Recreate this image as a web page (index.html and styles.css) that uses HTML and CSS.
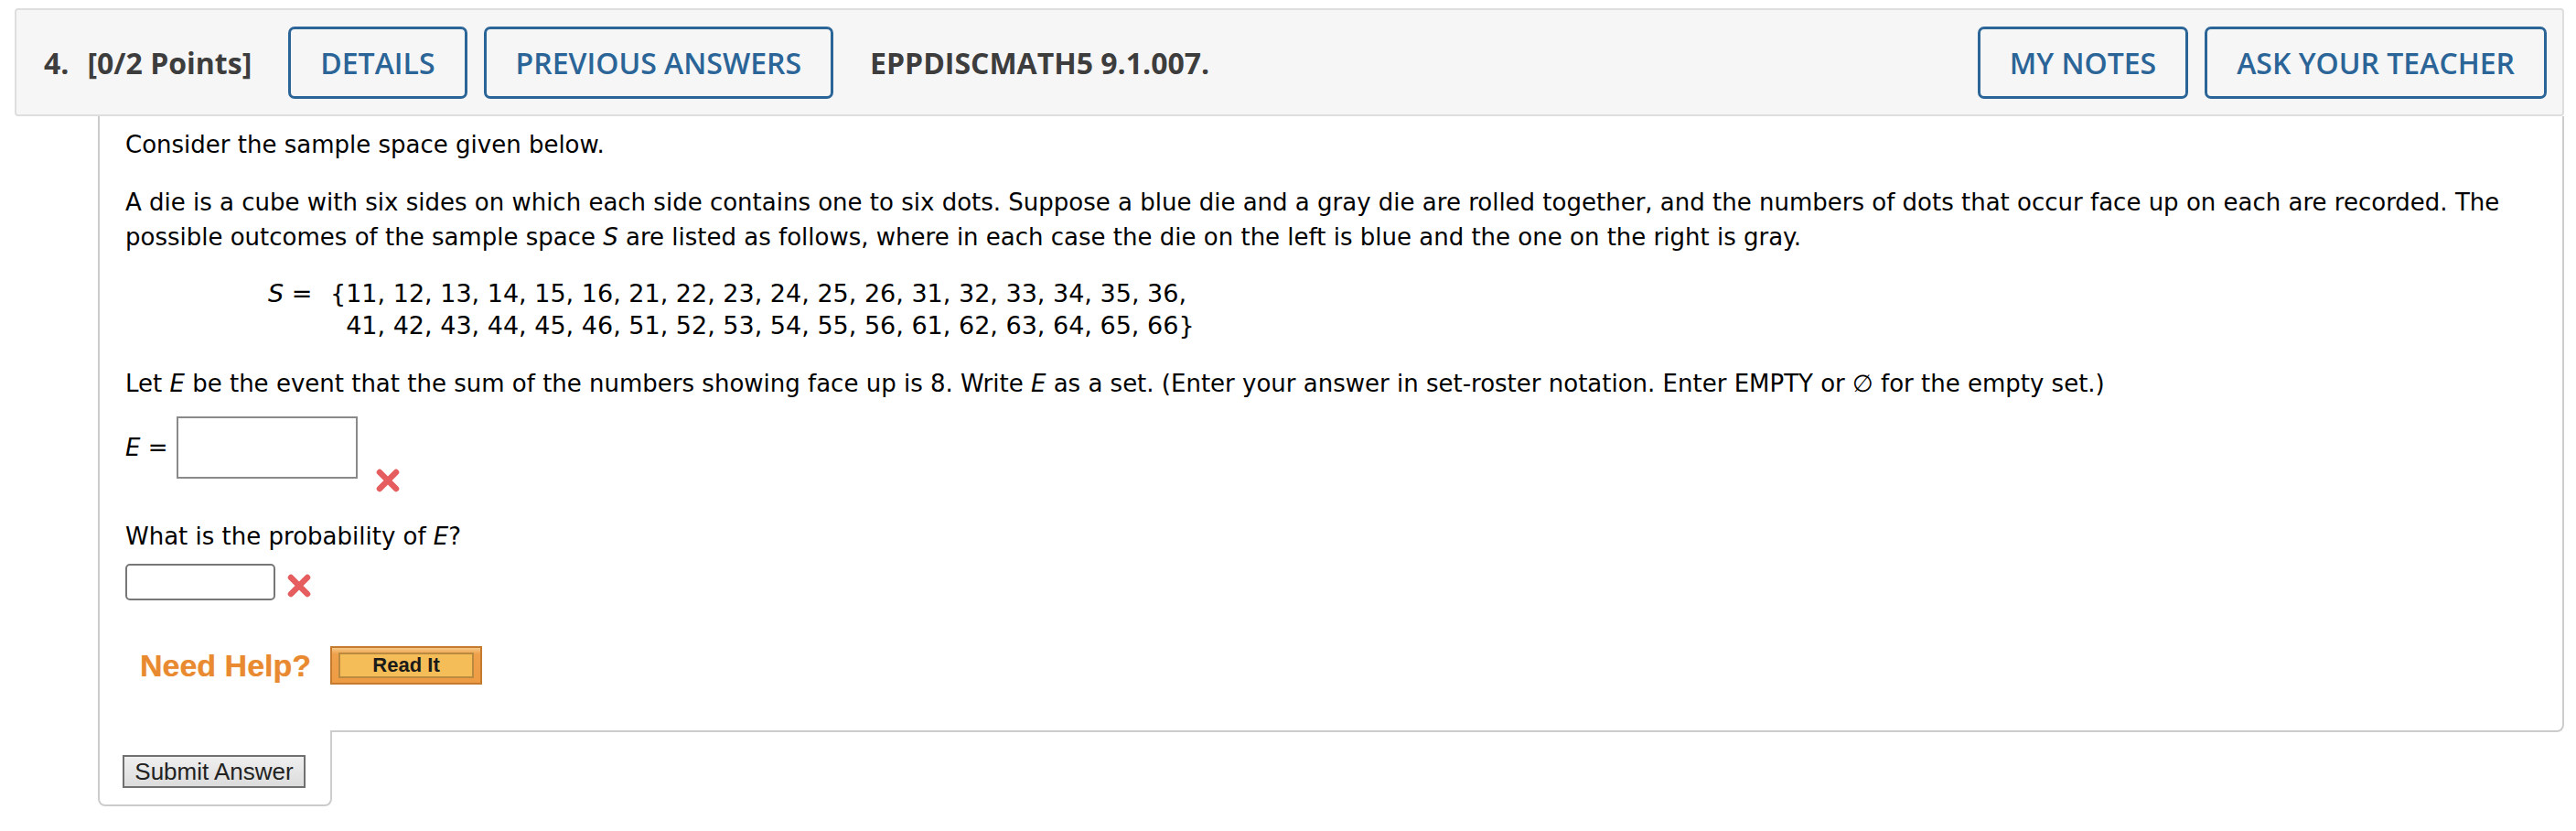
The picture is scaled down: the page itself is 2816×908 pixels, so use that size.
FILE: index.html
```html
<!DOCTYPE html>
<html lang="en">
<head>
<meta charset="utf-8">
<title>Question 4</title>
<link rel="stylesheet" href="styles.css">
</head>
<body>
<div class="page">
  <div class="qhead">
    <span class="qnum">4.</span>
    <span class="qpts">[0/2 Points]</span>
    <button class="hbtn first">DETAILS</button>
    <button class="hbtn">PREVIOUS ANSWERS</button>
    <span class="qcode">EPPDISCMATH5 9.1.007.</span>
    <div class="hright">
      <button class="hbtn">MY NOTES</button>
      <button class="hbtn">ASK YOUR TEACHER</button>
    </div>
  </div>

  <div class="qbody">
    <p class="para">Consider the sample space given below.</p>
    <p class="para">A die is a cube with six sides on which each side contains one to six dots. Suppose a blue die and a gray die are rolled together, and the numbers of dots that occur face up on each are recorded. The possible outcomes of the sample space <i>S</i> are listed as follows, where in each case the die on the left is blue and the one on the right is gray.</p>
    <div class="setrow">
      <span class="setlabel"><i>S</i> =</span>
      <div class="setvals">
        <div>{11, 12, 13, 14, 15, 16, 21, 22, 23, 24, 25, 26, 31, 32, 33, 34, 35, 36,</div>
        <div class="cont">41, 42, 43, 44, 45, 46, 51, 52, 53, 54, 55, 56, 61, 62, 63, 64, 65, 66}</div>
      </div>
    </div>
    <p class="para letp">Let <i>E</i> be the event that the sum of the numbers showing face up is 8. Write <i>E</i> as a set. (Enter your answer in set-roster notation. Enter EMPTY or ∅ for the empty set.)</p>
    <div class="erow">
      <span class="elabel"><i>E</i> =</span>
      <span class="bigin"></span>
      <svg class="xmark xbig" width="28" height="26" viewBox="0 0 28 26"><path d="M5 4 L23 22 M23 4 L5 22" stroke="#e55d5f" stroke-width="6.5" stroke-linecap="round" fill="none"/></svg>
    </div>
    <p class="para whatp">What is the probability of <i>E</i>?</p>
    <div class="prow">
      <span class="smallin"></span>
      <svg class="xmark xsmall" width="28" height="26" viewBox="0 0 28 26"><path d="M5 4 L23 22 M23 4 L5 22" stroke="#e55d5f" stroke-width="6.5" stroke-linecap="round" fill="none"/></svg>
    </div>
    <div class="helprow">
      <span class="needhelp">Need Help?</span>
      <span class="readit"><span class="readit-in">Read It</span></span>
    </div>
  </div>
  <div class="qtab">
    <button class="submit">Submit Answer</button>
  </div>
</div>
</body>
</html>
```

FILE: styles.css
```css
html, body {
  margin: 0;
  padding: 0;
  background: #ffffff;
}

.page {
  padding: 9px 13px 0 16px;
}

.qhead {
  display: flex;
  align-items: center;
  height: 118px;
  box-sizing: border-box;
  background: #f6f6f6;
  border: 2px solid #dedede;
  border-radius: 4px;
  padding: 0 17px 0 30px;
  font-family: "Open Sans", "Liberation Sans", sans-serif;
  font-size: 32px;
  color: #3d3d3d;
}

.qnum,
.qpts,
.qcode {
  font-weight: 700;
  white-space: nowrap;
}

.qpts {
  margin-left: 20px;
}

.hbtn {
  height: 79px;
  box-sizing: border-box;
  border: 3px solid #2b6598;
  border-radius: 7px;
  background: transparent;
  color: #2b6598;
  font-family: "Open Sans", "Liberation Sans", sans-serif;
  font-weight: 600;
  font-size: 32px;
  padding: 0 32px;
  margin-left: 18px;
  white-space: nowrap;
  cursor: pointer;
}

.hbtn.first {
  margin-left: 40px;
}

.qcode {
  margin-left: 40px;
}

.hright {
  margin-left: auto;
  display: flex;
}

.qbody {
  margin-left: 91px;
  border: 2px solid #cccccc;
  border-top: 0;
  border-radius: 0 0 8px 0;
  padding: 12px 28px 50px 28px;
  font-family: "DejaVu Sans", Verdana, sans-serif;
  font-size: 26px;
  line-height: 38px;
  color: #000000;
}

.para {
  margin: 0 0 25px 0;
}

.setrow {
  display: flex;
  padding-left: 156px;
  font-size: 27px;
  line-height: 35px;
  margin-bottom: 27px;
}

.setlabel {
  width: 68px;
  white-space: nowrap;
}

.setvals .cont {
  padding-left: 0.636em;
}

.letp {
  margin-bottom: 17px;
}

.erow {
  display: flex;
  align-items: center;
}

.elabel {
  width: 56px;
  white-space: nowrap;
}

.bigin {
  display: block;
  width: 198px;
  height: 68px;
  box-sizing: border-box;
  border: 2px solid #8a8a8a;
  background: #fff;
}

.xmark {
  display: block;
  align-self: flex-end;
}

.xbig {
  margin-left: 19px;
  margin-bottom: -15px;
}

.whatp {
  margin: 44px 0 11px 0;
}

.prow {
  display: flex;
  align-items: center;
}

.smallin {
  display: block;
  width: 164px;
  height: 40px;
  box-sizing: border-box;
  border: 2px solid #777777;
  border-radius: 5px;
  background: #fff;
}

.xsmall {
  margin-left: 12px;
  margin-bottom: 3px;
}

.helprow {
  display: flex;
  align-items: center;
  margin-top: 50px;
  padding-left: 16px;
}

.needhelp {
  font-family: "Liberation Sans", Arial, sans-serif;
  font-weight: 700;
  font-size: 34px;
  line-height: 42px;
  color: #e98a31;
  text-shadow: 0 0 1px rgba(233, 138, 49, 0.6);
}

.readit {
  display: block;
  margin-left: 21px;
  width: 166px;
  height: 42px;
  box-sizing: border-box;
  border: 2px solid #c47b30;
  background: linear-gradient(#f6c886 0, #efa04a 18%, #ee9c44 100%);
  padding: 5px 7px 5px 7px;
}

.readit-in {
  display: block;
  height: 100%;
  box-sizing: border-box;
  border: 2px solid #b98a40;
  background: #f4bd58;
  font-family: "Liberation Sans", Arial, sans-serif;
  font-weight: 700;
  font-size: 22px;
  line-height: 24px;
  color: #1a1a1a;
  text-align: center;
}

.qtab {
  margin-left: 91px;
  margin-top: -2px;
  width: 256px;
  box-sizing: border-box;
  border: 2px solid #cccccc;
  border-top: 0;
  border-radius: 0 0 8px 8px;
  background: #fff;
  padding: 27px 0 18px 25px;
}

.submit {
  display: block;
  width: 200px;
  height: 36px;
  box-sizing: border-box;
  border: 2px solid #707070;
  background: linear-gradient(#efefef, #dcdcdc);
  font-family: "Liberation Sans", Arial, sans-serif;
  font-size: 26px;
  line-height: 30px;
  color: #222222;
  padding: 0;
}
```
